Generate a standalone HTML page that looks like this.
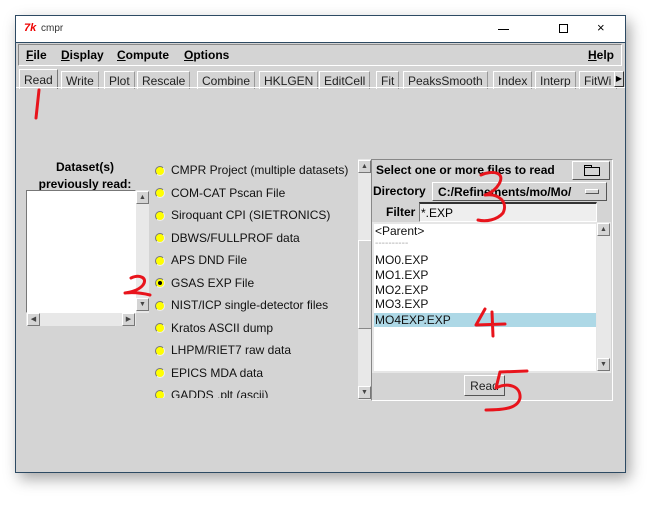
<!DOCTYPE html>
<html><head><style>
*{margin:0;padding:0;box-sizing:border-box}
body{width:661px;height:510px;background:#fff;position:relative;overflow:hidden;font-family:"Liberation Sans",sans-serif;font-size:12px;color:#000}
.a{position:absolute}
.win{left:15px;top:15px;width:611px;height:458px;background:#d4d4d4;border:1px solid #2d4a63;box-shadow:4px 6px 14px rgba(0,0,0,.35)}
.title{left:0;top:0;width:609px;height:27px;background:#fff;border-bottom:1px solid #2d4a63}
.menu{left:2px;top:28px;width:604px;height:22px;border:1px solid #888;border-right-color:#fff;border-bottom-color:#fff;font-weight:bold;font-size:12px}
.menu span{position:absolute;top:3px}
.tabs{left:0;top:53px;height:20px;width:609px}
.tab{position:absolute;top:2px;height:18px;border-left:1px solid #fff;border-top:1px solid #fff;border-right:1px solid #999;padding:2px 4px 0;font-size:12px;color:#222;white-space:nowrap;background:#d4d4d4}
.tabline{left:0;top:72px;width:609px;height:1px;background:#fff}
.sb{background:#e8e8e8}
.sbtn{position:absolute;width:13px;height:13px;background:#d4d4d4;border:1px solid #fff;border-right-color:#777;border-bottom-color:#777;font-size:7px;text-align:center;line-height:11px;color:#444}
.radio{position:absolute;width:10px;height:10px;border-radius:50%;background:#ff0;border:1px solid #777;border-right-color:#eee;border-bottom-color:#eee}
.rl{position:absolute;font-size:12px;color:#111}
.sunk{border:1px solid #777;border-right-color:#fff;border-bottom-color:#fff}
.rais{border:1px solid #fff;border-right-color:#555;border-bottom-color:#555}
.f{position:absolute;left:3px;font-size:12px;color:#111}
</style></head><body>
<div class="a win">
 <div class="a title">
  <div class="a" style="left:8px;top:6px;color:#e00;font-weight:bold;font-style:italic;font-size:11px">7k</div>
  <div class="a" style="left:25px;top:7px;font-size:10px;color:#333">cmpr</div>
  <div class="a" style="left:482px;top:13px;width:11px;height:1px;background:#000"></div>
  <div class="a" style="left:543px;top:8px;width:9px;height:9px;border:1px solid #000"></div>
  <div class="a" style="left:581px;top:4px;font-size:13px;color:#000">×</div>
 </div>
 <div class="a menu">
  <span style="left:7px"><u>F</u>ile</span><span style="left:42px"><u>D</u>isplay</span><span style="left:98px"><u>C</u>ompute</span><span style="left:165px"><u>O</u>ptions</span><span style="left:569px"><u>H</u>elp</span>
 </div>
 <div class="a tabs">
  <div class="tab" style="left:3px;top:0;height:20px;padding-top:3px;border-right:1px solid #777">Read</div>
  <div class="tab" style="left:45px">Write</div>
  <div class="tab" style="left:88px">Plot</div>
  <div class="tab" style="left:121px">Rescale</div>
  <div class="tab" style="left:181px">Combine</div>
  <div class="tab" style="left:243px">HKLGEN</div>
  <div class="tab" style="left:303px">EditCell</div>
  <div class="tab" style="left:360px">Fit</div>
  <div class="tab" style="left:387px">PeaksSmooth</div>
  <div class="tab" style="left:477px">Index</div>
  <div class="tab" style="left:519px">Interp</div>
  <div class="tab" style="left:563px;width:38px;overflow:hidden">FitWi</div>
  <div class="a" style="left:598px;top:2px;width:10px;height:16px;background:#d4d4d4;border:1px solid #fff;border-right-color:#333;border-bottom-color:#333;font-size:8px;line-height:14px;text-align:center">▶</div>
 </div>
</div>
<div class="a" style="left:16px;top:87px;width:609px;height:1px;background:#fff"></div>

<div class="a" style="left:30px;top:159px;width:110px;text-align:center;font-weight:bold;font-size:12px;line-height:17px">Dataset(s)<br>previously read:</div>
<div class="a sunk" style="left:26px;top:190px;width:110px;height:123px;background:#fff"></div>
<div class="a sb" style="left:136px;top:190px;width:13px;height:123px"></div>
<div class="sbtn" style="left:136px;top:191px">▲</div>
<div class="sbtn" style="left:136px;top:298px">▼</div>
<div class="a sb" style="left:26px;top:313px;width:110px;height:13px"></div>
<div class="sbtn" style="left:27px;top:313px">◀</div>
<div class="sbtn" style="left:122px;top:313px">▶</div>

<div class="radio" style="left:155px;top:166px"></div><div class="rl" style="left:171px;top:163px">CMPR Project (multiple datasets)</div>
<div class="radio" style="left:155px;top:188px"></div><div class="rl" style="left:171px;top:186px">COM-CAT Pscan File</div>
<div class="radio" style="left:155px;top:211px"></div><div class="rl" style="left:171px;top:208px">Siroquant CPI (SIETRONICS)</div>
<div class="radio" style="left:155px;top:233px"></div><div class="rl" style="left:171px;top:231px">DBWS/FULLPROF data</div>
<div class="radio" style="left:155px;top:256px"></div><div class="rl" style="left:171px;top:253px">APS DND File</div>
<div class="radio" style="left:155px;top:278px"><div class="a" style="left:2px;top:2px;width:4px;height:4px;border-radius:50%;background:#000"></div></div><div class="rl" style="left:171px;top:276px">GSAS EXP File</div>
<div class="radio" style="left:155px;top:301px"></div><div class="rl" style="left:171px;top:298px">NIST/ICP single-detector files</div>
<div class="radio" style="left:155px;top:323px"></div><div class="rl" style="left:171px;top:321px">Kratos ASCII dump</div>
<div class="radio" style="left:155px;top:346px"></div><div class="rl" style="left:171px;top:343px">LHPM/RIET7 raw data</div>
<div class="radio" style="left:155px;top:368px"></div><div class="rl" style="left:171px;top:366px">EPICS MDA data</div>
<div class="a" style="left:150px;top:387px;width:210px;height:11px;overflow:hidden"><div class="radio" style="left:5px;top:3px"></div><div class="rl" style="left:21px;top:1px">GADDS .plt (ascii)</div></div>

<div class="a sb" style="left:358px;top:159px;width:14px;height:241px"></div>
<div class="sbtn" style="left:358px;top:160px">▲</div>
<div class="sbtn" style="left:358px;top:386px">▼</div>
<div class="a" style="left:358px;top:240px;width:14px;height:89px;background:#d4d4d4;border:1px solid #fff;border-right-color:#888;border-bottom-color:#888"></div>

<div class="a" style="left:371px;top:159px;width:242px;height:242px;border:1px solid #fff;border-top-color:#888;border-left-color:#888"></div>
<div class="a" style="left:376px;top:163px;font-weight:bold;font-size:12px">Select one or more files to read</div>
<div class="a rais" style="left:572px;top:161px;width:38px;height:19px;background:#d4d4d4"><div class="a" style="left:11px;top:5px;width:16px;height:9px;border:1px solid #000"></div><div class="a" style="left:11px;top:3px;width:8px;height:3px;border:1px solid #000;border-bottom:none"></div></div>
<div class="a" style="left:373px;top:184px;font-weight:bold">Directory</div>
<div class="a rais" style="left:432px;top:182px;width:175px;height:19px;background:#d4d4d4;font-weight:bold;padding:2px 0 0 5px">C:/Refinements/mo/Mo/<div class="a rais" style="left:152px;top:6px;width:14px;height:5px"></div></div>
<div class="a" style="left:386px;top:205px;font-weight:bold">Filter</div>
<div class="a sunk" style="left:419px;top:202px;width:178px;height:20px;background:#eee;border-top:2px solid #333;padding:2px 0 0 1px">*.EXP</div>
<div class="a sunk" style="left:372px;top:222px;width:226px;height:151px;background:#fff;border:2px solid #e6e6e6"></div>
<div class="a" style="left:374px;top:313px;width:222px;height:14px;background:#add8e6"></div>
<div class="f" style="left:375px;top:224px;position:absolute">&lt;Parent&gt;</div>
<div class="a" style="left:375px;top:238px;font-size:10px;color:#aaa">----------</div>
<div class="f" style="left:375px;top:253px;position:absolute">MO0.EXP</div>
<div class="f" style="left:375px;top:268px;position:absolute">MO1.EXP</div>
<div class="f" style="left:375px;top:283px;position:absolute">MO2.EXP</div>
<div class="f" style="left:375px;top:297px;position:absolute">MO3.EXP</div>
<div class="f" style="left:375px;top:313px;position:absolute">MO4EXP.EXP</div>
<div class="a sb" style="left:597px;top:222px;width:14px;height:151px"></div>
<div class="sbtn" style="left:597px;top:223px">▲</div>
<div class="sbtn" style="left:597px;top:358px">▼</div>
<div class="a rais" style="left:464px;top:375px;width:41px;height:21px;background:#d4d4d4;text-align:center;padding-top:3px;color:#222">Read</div>

<svg class="a" style="left:0;top:0" width="661" height="510" fill="none" stroke="#e8141c" stroke-width="3" stroke-linecap="round" stroke-linejoin="round">
<path d="M39 90 L36 118"/>
<path d="M131 278 C140 274 148 278 143 285 C139 290 132 292 125 293 C134 292 142 293 150 295"/>
<path d="M481 175 C492 170 506 172 499 184 C495 191 488 194 485 195 C500 193 508 203 503 213 C497 220 486 222 478 220"/>
<path d="M485 309 L476 325 L505 324 M492 312 L493 336"/>
<path d="M500 372 L527 371 M500 372 L496 388 C508 382 521 386 520 398 C518 408 505 410 486 410"/>
</svg>
</body></html>
